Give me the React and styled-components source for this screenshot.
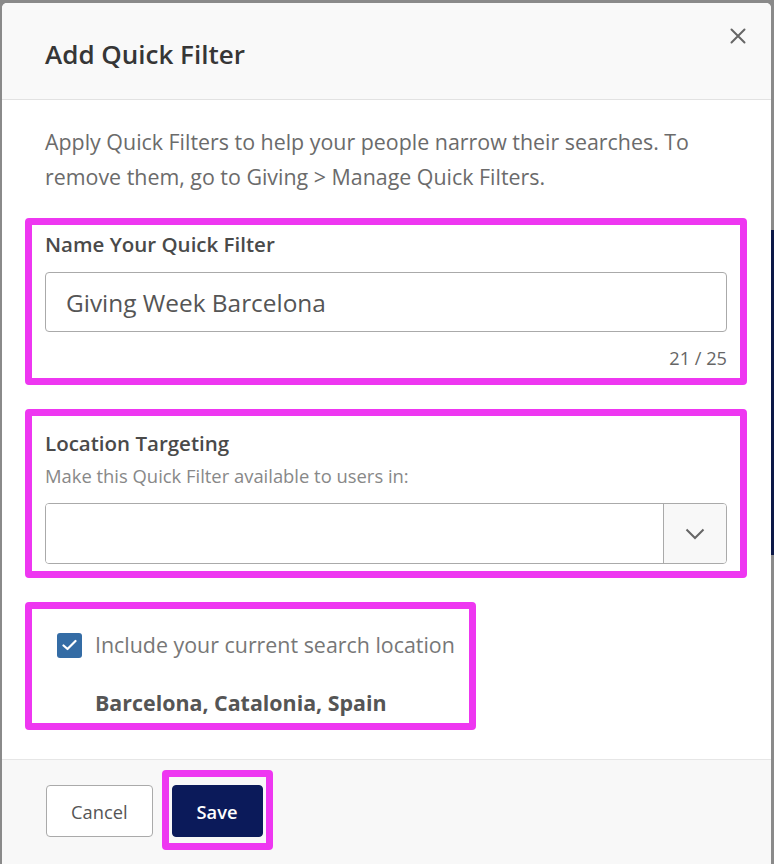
import React from "react"
import styled, { createGlobalStyle } from "styled-components"

const GlobalStyle = createGlobalStyle`
  body {
    margin: 0;
    font-family: "Open Sans", "Noto Sans", sans-serif;
  }
`;

// the page behind the modal only peeks out along the edges
const Backdrop = styled.div`
  display: flex;
  height: 864px;
  padding: 3px 3px 0 2px;
  box-sizing: border-box;
  overflow: hidden;
  background:
    linear-gradient(to bottom, #8a8a8a 0 230px, #0c1847 230px 555px, #8a8a8a 555px) right top / 3px 100% no-repeat,
    #8a8a8a;
`;

const Modal = styled.div`
  width: 769px;
  display: flex;
  flex-direction: column;
  background: #fff;
  border-radius: 5px 5px 0 0;
  overflow: hidden;
`;

const Header = styled.div`
  height: 97px;
  box-sizing: border-box;
  display: flex;
  justify-content: space-between;
  align-items: flex-start;
  padding: 34px 22px 0 43px;
  background: #f9f9f9;
  border-bottom: 1px solid #e2e2e2;
`;

const Title = styled.h2`
  margin: 0;
  font-size: 26px;
  line-height: 34px;
  font-weight: 600;
  color: #363636;
`;

const CloseButton = styled.button`
  border: none;
  background: none;
  padding: 0;
  margin-top: -12px;
  width: 22px;
  height: 22px;
  display: flex;
  align-items: center;
  justify-content: center;
  cursor: pointer;
`;

const Body = styled.div`
  display: flex;
  flex-direction: column;
  gap: 24px;
  padding: 24px 44px 29px 43px;
  border-bottom: 1px solid #e6e6e6;
`;

const Intro = styled.p`
  margin: 0;
  font-size: 21.4px;
  line-height: 35px;
  color: #6b6b6b;
`;

const Highlight = styled.div`
  display: flex;
  flex-direction: column;
  align-self: ${(p) => (p.$fit ? "flex-start" : "stretch")};
  margin: 0 -20px;
  padding: ${(p) => p.$pad || "0 13px"};
  border: 7px solid #ee37f1;
  border-radius: 4px;
`;

const Label = styled.label`
  font-size: 20.5px;
  line-height: 28px;
  font-weight: 600;
  color: #4a4a4a;
`;

const Hint = styled.div`
  margin-top: 7px;
  font-size: 18.4px;
  line-height: 24px;
  color: #888;
`;

const TextInput = styled.input`
  margin-top: 14px;
  height: 60px;
  box-sizing: border-box;
  padding: 0 20px;
  border: 1px solid #aaa;
  border-radius: 4px;
  font-family: inherit;
  font-size: 24.4px;
  color: #555;
  outline: none;
`;

const Counter = styled.div`
  margin-top: 14px;
  text-align: right;
  font-size: 18.2px;
  line-height: 24px;
  color: #666;
`;

const Select = styled.div`
  margin-top: 15px;
  height: 61px;
  box-sizing: border-box;
  display: flex;
  border: 1px solid #aaa;
  border-radius: 4px;
  overflow: hidden;
`;

const SelectValue = styled.div`
  flex: 1;
  background: #fff;
`;

const SelectToggle = styled.div`
  width: 62px;
  display: flex;
  align-items: center;
  justify-content: center;
  background: #f8f8f8;
  border-left: 1px solid #aaa;
`;

const CheckRow = styled.div`
  display: flex;
  align-items: center;
  gap: 13px;
  line-height: 28px;
`;

const Checkbox = styled.span`
  width: 25px;
  height: 25px;
  display: flex;
  align-items: center;
  justify-content: center;
  background: #346ca5;
  border-radius: 3px;
`;

const CheckLabel = styled.span`
  font-size: 21.4px;
  color: #777;
`;

const Place = styled.div`
  margin: 30px 0 0 38px;
  font-size: 21.4px;
  line-height: 28px;
  font-weight: 700;
  color: #555;
`;

const Footer = styled.div`
  flex: 1;
  display: flex;
  align-items: flex-start;
  padding: 10px 43px 0 44px;
  background: #f8f8f8;
`;

const Button = styled.button`
  height: 52px;
  box-sizing: border-box;
  padding: 0 24px;
  border-radius: 4px;
  border: 1px solid ${(p) => (p.$primary ? "#0b1a5a" : "#aaa")};
  background: ${(p) => (p.$primary ? "#0b1a5a" : "#fff")};
  color: ${(p) => (p.$primary ? "#fff" : "#555")};
  font-family: inherit;
  font-size: 18.3px;
  font-weight: ${(p) => (p.$primary ? 600 : 400)};
  cursor: pointer;
`;

const CancelWrap = styled.div`
  margin-top: 15px;
  display: flex;
`;

const SaveHighlight = styled.div`
  margin-left: 9px;
  padding: 8px 3px 6px;
  border: 7px solid #ee37f1;
  border-radius: 4px;
  display: flex;
`;

export default function App() {
  return (
    <>
      <GlobalStyle />
      <Backdrop>
        <Modal>
          <Header>
            <Title>Add Quick Filter</Title>
            <CloseButton aria-label="Close">
              <svg width="16" height="16" viewBox="0 0 16 16">
                <path d="M1.5 1.5 L14.5 14.5 M14.5 1.5 L1.5 14.5" stroke="#666" strokeWidth="2" strokeLinecap="round" />
              </svg>
            </CloseButton>
          </Header>
          <Body>
            <Intro>
              Apply Quick Filters to help your people narrow their searches. To remove them, go to Giving &gt; Manage Quick Filters.
            </Intro>
            <Highlight $pad="5px 13px 8px">
              <Label>Name Your Quick Filter</Label>
              <TextInput defaultValue="Giving Week Barcelona" />
              <Counter>21 / 25</Counter>
            </Highlight>
            <Highlight $pad="13px 13px 7px">
              <Label>Location Targeting</Label>
              <Hint>Make this Quick Filter available to users in:</Hint>
              <Select>
                <SelectValue />
                <SelectToggle>
                  <svg width="20" height="12" viewBox="0 0 20 12">
                    <path d="M1.5 1.5 L10 10 L18.5 1.5" fill="none" stroke="#666" strokeWidth="2" />
                  </svg>
                </SelectToggle>
              </Select>
            </Highlight>
            <Highlight $fit $pad="22px 14px 6px 25px">
              <CheckRow>
                <Checkbox>
                  <svg width="15" height="12" viewBox="0 0 15 12">
                    <path d="M1.5 6.5 L5.5 10 L13.5 2" fill="none" stroke="#fff" strokeWidth="2.2" strokeLinecap="round" strokeLinejoin="round" />
                  </svg>
                </Checkbox>
                <CheckLabel>Include your current search location</CheckLabel>
              </CheckRow>
              <Place>Barcelona, Catalonia, Spain</Place>
            </Highlight>
          </Body>
          <Footer>
            <CancelWrap>
              <Button>Cancel</Button>
            </CancelWrap>
            <SaveHighlight>
              <Button $primary>Save</Button>
            </SaveHighlight>
          </Footer>
        </Modal>
      </Backdrop>
    </>
  )
}
